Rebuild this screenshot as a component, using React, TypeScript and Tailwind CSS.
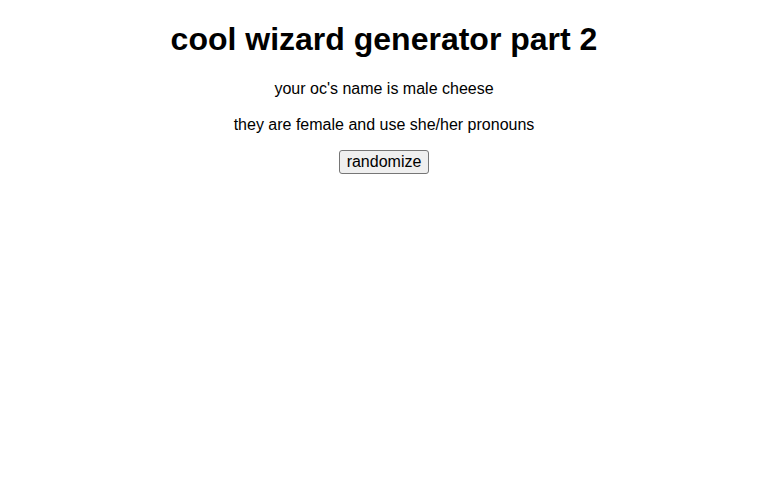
import { useState } from 'react';

const names = ['male cheese', 'sir wobbles', 'gandalf two', 'moonbeam'];
const genders = [
  { gender: 'female', pronouns: 'she/her' },
  { gender: 'male', pronouns: 'he/him' },
  { gender: 'nonbinary', pronouns: 'they/them' },
];

export default function App() {
  const [name, setName] = useState(names[0]);
  const [who, setWho] = useState(genders[0]);

  const randomize = () => {
    setName(names[Math.floor(Math.random() * names.length)]);
    setWho(genders[Math.floor(Math.random() * genders.length)]);
  };

  return (
    <div className="min-h-[480px] bg-white text-black text-center font-['Liberation_Sans',Arial,sans-serif]">
      <div className="pt-[21px]">
        <h1 className="text-[32px] leading-[37px] font-bold">cool wizard generator part 2</h1>
        <p className="mt-[22px] text-base leading-[18px]">your oc's name is {name}</p>
        <p className="mt-[18px] text-base leading-[18px]">
          they are {who.gender} and use {who.pronouns} pronouns
        </p>
        <div className="mt-[16px]">
          <button
            onClick={randomize}
            className="h-[24px] px-[7px] text-base leading-[18px] bg-[#efefef] border border-[#767676] rounded-[3px] hover:bg-[#e5e5e5]"
          >
            randomize
          </button>
        </div>
      </div>
    </div>
  );
}
